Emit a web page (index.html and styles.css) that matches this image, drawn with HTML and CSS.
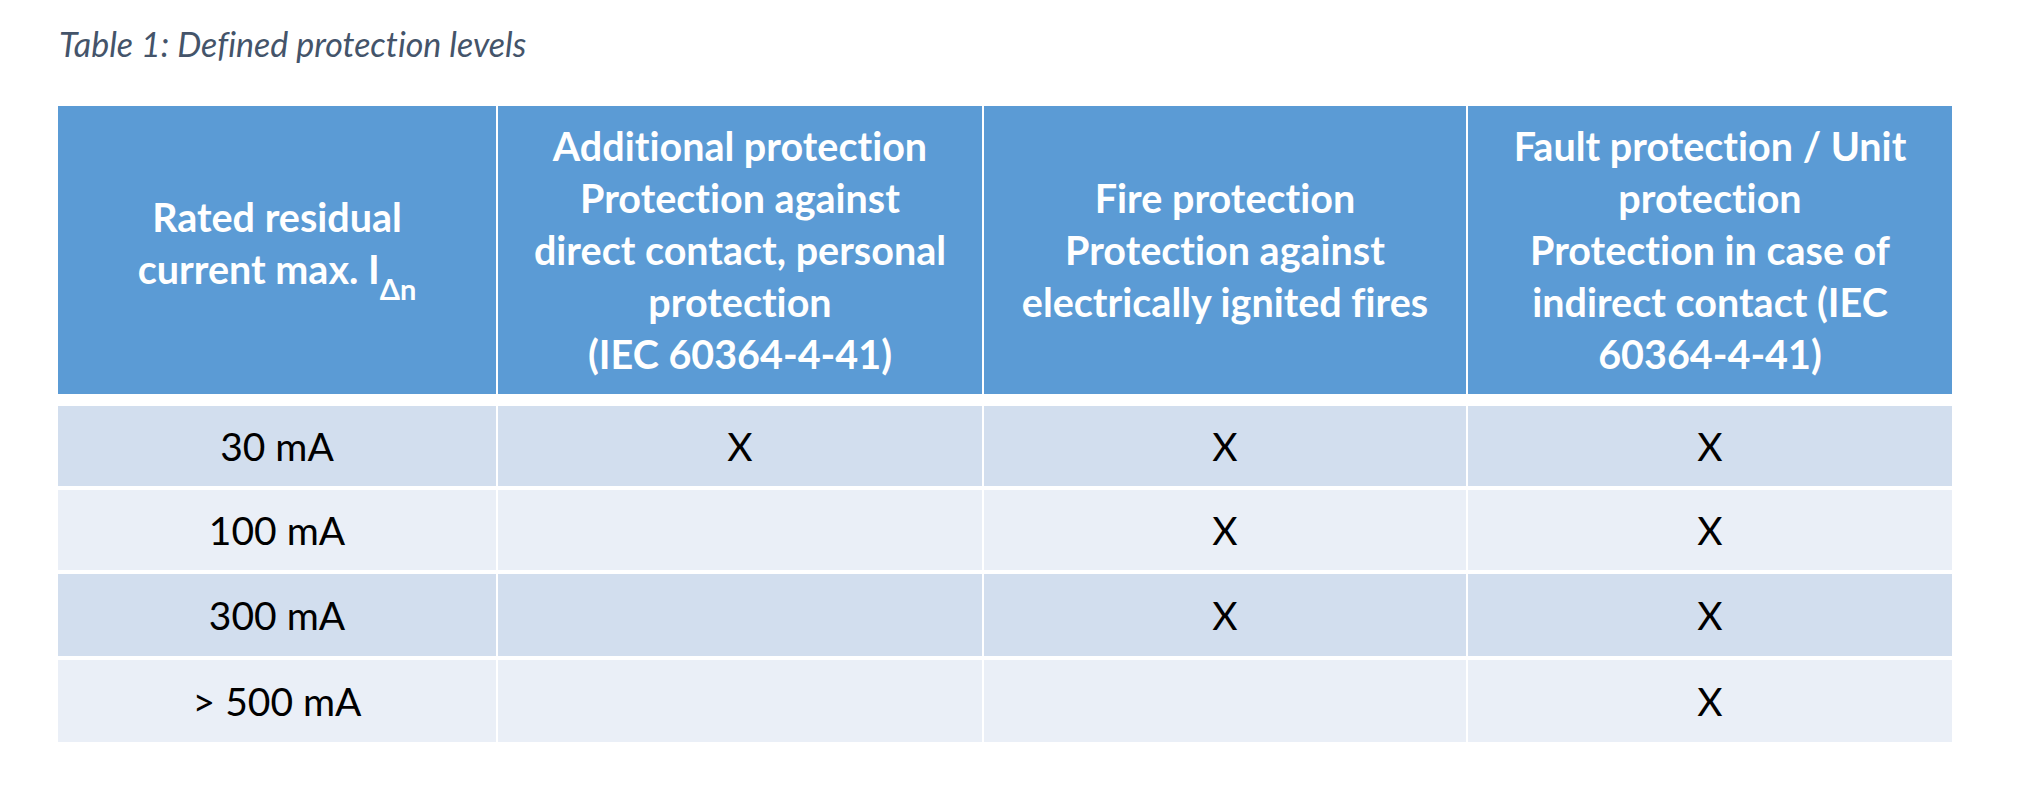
FILE: index.html
```html
<!DOCTYPE html>
<html lang="en">
<head>
<meta charset="utf-8">
<title>Defined protection levels</title>
<link rel="stylesheet" href="styles.css">
</head>
<body>
<p class="caption">Table 1: Defined protection levels</p>
<div class="table">
  <div class="cell head head-first"><span>Rated residual<br>current max. I<sub class="sub">Δn</sub></span></div>
  <div class="cell head"><span>Additional protection<br>Protection against<br>direct contact, personal<br>protection<br>(IEC 60364-4-41)</span></div>
  <div class="cell head"><span>Fire protection<br>Protection against<br>electrically ignited fires</span></div>
  <div class="cell head"><span>Fault protection / Unit<br>protection<br>Protection in case of<br>indirect contact (IEC<br>60364-4-41)</span></div>

  <div class="cell odd">30 mA</div>
  <div class="cell odd">X</div>
  <div class="cell odd">X</div>
  <div class="cell odd">X</div>

  <div class="cell even">100 mA</div>
  <div class="cell even"></div>
  <div class="cell even">X</div>
  <div class="cell even">X</div>

  <div class="cell odd">300 mA</div>
  <div class="cell odd"></div>
  <div class="cell odd">X</div>
  <div class="cell odd">X</div>

  <div class="cell even">&gt; 500 mA</div>
  <div class="cell even"></div>
  <div class="cell even"></div>
  <div class="cell even">X</div>
</div>
</body>
</html>
```

FILE: styles.css
```css
html, body {
  margin: 0;
  padding: 0;
  background: #ffffff;
}

body {
  font-family: Lato, "Liberation Sans", sans-serif;
  color: #000000;
  font-variant-ligatures: none;
}

.caption {
  margin: 0;
  padding: 24px 0 0 59px;
  font-style: italic;
  font-size: 34px;
  line-height: 40px;
  color: #44546A;
}

.table {
  margin: 42px 0 0 58px;
  width: 1894px;
  display: grid;
  grid-template-columns: 438px 484px 482px 484px;
  grid-template-rows: 296px 80px 80px 82px 82px;
  column-gap: 2px;
  row-gap: 4px;
}

.cell {
  display: flex;
  align-items: center;
  justify-content: center;
  text-align: center;
  font-size: 39px;
  line-height: 52px;
  white-space: nowrap;
}

.head {
  margin-bottom: 8px;
  background: #5B9BD5;
  color: #ffffff;
  font-weight: 700;
  font-size: 39.5px;
}

.head-first {
  padding-bottom: 14px;
  box-sizing: border-box;
}

.sub {
  font-size: 29px;
  line-height: 0;
  vertical-align: -16px;
}

.odd {
  background: #D2DEEE;
}

.even {
  background: #EAEFF7;
}
```
